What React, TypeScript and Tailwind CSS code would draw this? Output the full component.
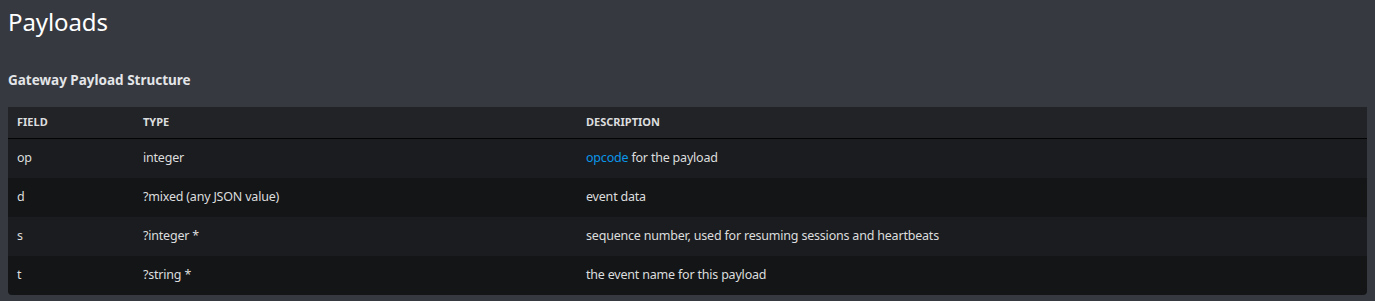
import React from "react";

const rows: { f: string; t: string; d: React.ReactNode }[] = [
  { f: "op", t: "integer", d: (<><span className="text-[#0a96ea]">opcode</span> for the payload</>) },
  { f: "d", t: "?mixed (any JSON value)", d: "event data" },
  { f: "s", t: "?integer *", d: "sequence number, used for resuming sessions and heartbeats" },
  { f: "t", t: "?string *", d: "the event name for this payload" },
];

export default function App() {
  return (
    <div
      className="w-[1375px] h-[301px] bg-[#36393f] overflow-hidden pl-2 pr-2"
      style={{ fontFamily: '"Noto Sans", "Open Sans", sans-serif' }}
    >
      <h1 className="text-[24px] leading-[34px] pt-[5px] text-white font-normal tracking-[-0.1px]">Payloads</h1>
      <h3 className="mt-[31px] text-[13.5px] leading-[20px] font-bold text-[#e3e5e8]">Gateway Payload Structure</h3>
      <div className="mt-[17px] w-[1359px] rounded-b-[4px] overflow-hidden">
        <div className="flex h-[32px] items-center bg-[#222327] border-b border-[#040405] text-[11px] font-bold text-[#dcddde]">
          <div className="w-[126px] pl-[9px]">FIELD</div>
          <div className="w-[443px] pl-[9px]">TYPE</div>
          <div className="flex-1 pl-[9px]">DESCRIPTION</div>
        </div>
        {rows.map((r, i) => (
          <div
            key={r.f}
            className={`flex h-[39px] items-center text-[12.5px] tracking-[-0.2px] text-[#dcddde] ${i % 2 === 0 ? "bg-[#1b1c1f]" : "bg-[#141517]"}`}
          >
            <div className="w-[126px] pl-[9px]">{r.f}</div>
            <div className="w-[443px] pl-[9px]">{r.t}</div>
            <div className="flex-1 pl-[9px]">{r.d}</div>
          </div>
        ))}
      </div>
    </div>
  );
}
